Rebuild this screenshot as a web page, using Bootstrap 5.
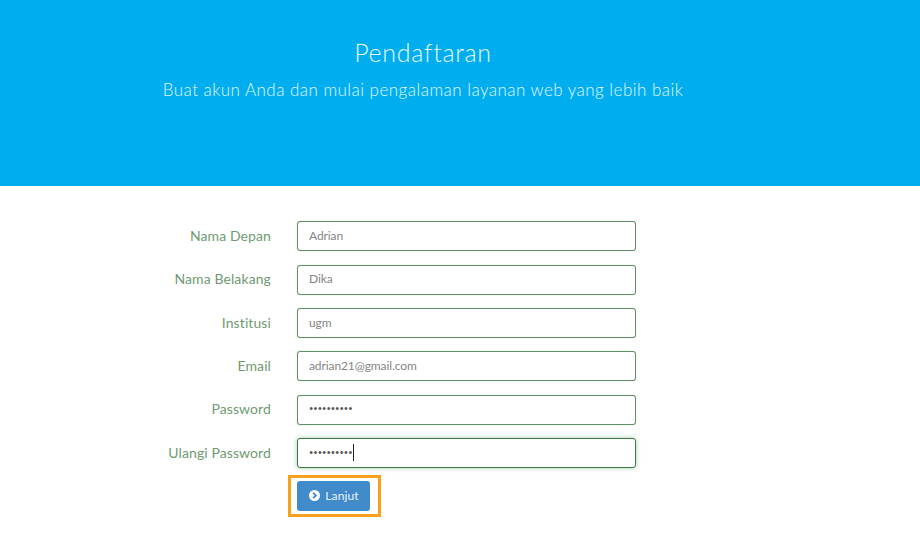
<!DOCTYPE html>
<html>
  <head>
    <title>Pendaftaran</title>
    <link href="https://cdn.jsdelivr.net/npm/bootstrap@5.3.2/dist/css/bootstrap.min.css" rel="stylesheet">
    <script src="https://cdn.jsdelivr.net/npm/bootstrap@5.3.2/dist/js/bootstrap.bundle.min.js"></script>
    <style>
      body { font-family: "Lato", "Liberation Sans", sans-serif; background: #fff; }
      .hero-band { height: 186px; background: #00aeef; color: #fff; padding: 0 74px 0 0; }
      .hero-title { font-size: 25px; font-weight: 300; line-height: 30px; padding-top: 37px; margin: 0; letter-spacing: .7px; color: #e6f7fe; }
      .hero-sub { font-size: 17px; font-weight: 300; line-height: 22px; margin: 12px 0 0; letter-spacing: .47px; color: #e0f6fe; }
      .signup-form { padding: 35.4px 0 0 0; }
      .form-line { height: 30px; margin-bottom: 13.33px; gap: 26px; }
      .line-label { width: 271px; margin: 0; padding-bottom: 2px; text-align: right; font-size: 14px; color: #6f9a72; letter-spacing: .1px; }
      .line-input { width: 339px; position: relative; }
      .line-input .form-control { height: 30px; padding: 0 11px 2px; border: 1px solid #5f8f63; border-radius: 3px; font-size: 12px; letter-spacing: -.1px; color: #858585; box-shadow: 0 0 1px rgba(95,143,99,.5); font-family: inherit; }
      .line-input .pass-field { font-size: 7.5px; letter-spacing: 0; color: #555; }
      .line-input .is-focus { border-color: #3f7a45; box-shadow: 0 0 5px rgba(95,160,100,.55); }
      .fake-caret { position: absolute; left: 56px; top: 6px; width: 1px; height: 17px; background: #222; }
      .orange-frame { width: 93px; height: 42px; margin: -6.33px 0 0 288px; padding: 3px 8px 3px 6px; border: 3px solid #f9a11b; }
      .btn-next { width: 73px; height: 30px; padding: 0 0 1px 1px; border: 0; border-radius: 3px; background: #428bca; color: #eaf3fa; font-size: 12px; letter-spacing: .1px; gap: 5px; }
      .btn-next svg { width: 11px; height: 11px; }
    </style>
  </head>
  <body>
    <header class="hero-band text-center">
      <h1 class="hero-title">Pendaftaran</h1>
      <p class="hero-sub">Buat akun Anda dan mulai pengalaman layanan web yang lebih baik</p>
    </header>
    <main>
      <form class="signup-form">
        <div class="form-line d-flex align-items-center">
          <label class="line-label" for="nama-depan">Nama Depan</label>
          <div class="line-input"><input class="form-control" id="nama-depan" type="text" value="Adrian"></div>
        </div>
        <div class="form-line d-flex align-items-center">
          <label class="line-label" for="nama-belakang">Nama Belakang</label>
          <div class="line-input"><input class="form-control" id="nama-belakang" type="text" value="Dika"></div>
        </div>
        <div class="form-line d-flex align-items-center">
          <label class="line-label" for="institusi">Institusi</label>
          <div class="line-input"><input class="form-control" id="institusi" type="text" value="ugm"></div>
        </div>
        <div class="form-line d-flex align-items-center">
          <label class="line-label" for="email">Email</label>
          <div class="line-input"><input class="form-control" id="email" type="text" value="adrian21@gmail.com"></div>
        </div>
        <div class="form-line d-flex align-items-center">
          <label class="line-label" for="password">Password</label>
          <div class="line-input"><input class="form-control pass-field" id="password" type="password" value="1234567890"></div>
        </div>
        <div class="form-line d-flex align-items-center">
          <label class="line-label" for="ulangi">Ulangi Password</label>
          <div class="line-input"><input class="form-control pass-field is-focus" id="ulangi" type="password" value="1234567890"><span class="fake-caret"></span></div>
        </div>
        <div class="orange-frame">
          <button class="btn-next d-flex align-items-center justify-content-center" type="button">
            <svg viewBox="0 0 16 16"><circle cx="8" cy="8" r="8" fill="#fff"/><path d="M6.2 4.2 10 8l-3.8 3.8" fill="none" stroke="#428bca" stroke-width="2.6"/></svg>
            Lanjut
          </button>
        </div>
      </form>
    </main>
  </body>
</html>
